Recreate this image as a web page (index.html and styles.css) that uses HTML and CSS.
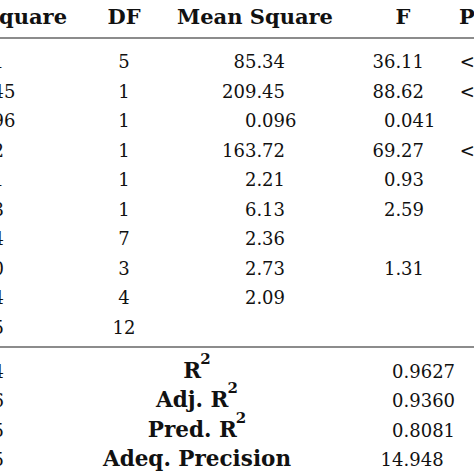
FILE: index.html
```html
<!DOCTYPE html>
<html lang="en">
<head>
<meta charset="utf-8">
<title>ANOVA</title>
<link rel="stylesheet" href="styles.css">
</head>
<body>
<div class="anova">
  <div class="thead">
    <div class="row">
      <div class="c-ss">Sum of Square</div>
      <div class="c-df">DF</div>
      <div class="c-ms">Mean Square</div>
      <div class="c-f">F</div>
      <div class="c-p">P-value</div>
    </div>
  </div>
  <div class="rule rule-top"></div>
  <div class="tbody">
    <div class="row">
      <div class="c-ss dec"><span class="i">426</span><span class="f">.71</span></div>
      <div class="c-df">5</div>
      <div class="c-ms dec"><span class="i">85</span><span class="f">.34</span></div>
      <div class="c-f dec"><span class="i">36</span><span class="f">.11</span></div>
      <div class="c-p dec"><span class="i">&lt; 0</span><span class="f">.0001</span></div>
    </div>
    <div class="row">
      <div class="c-ss dec"><span class="i">209</span><span class="f">.445</span></div>
      <div class="c-df">1</div>
      <div class="c-ms dec"><span class="i">209</span><span class="f">.45</span></div>
      <div class="c-f dec"><span class="i">88</span><span class="f">.62</span></div>
      <div class="c-p dec"><span class="i">&lt; 0</span><span class="f">.0001</span></div>
    </div>
    <div class="row">
      <div class="c-ss dec"><span class="i">0</span><span class="f">.096</span></div>
      <div class="c-df">1</div>
      <div class="c-ms dec"><span class="i">0</span><span class="f">.096</span></div>
      <div class="c-f dec"><span class="i">0</span><span class="f">.041</span></div>
      <div class="c-p dec"><span class="i">0</span><span class="f">.8435</span></div>
    </div>
    <div class="row">
      <div class="c-ss dec"><span class="i">163</span><span class="f">.72</span></div>
      <div class="c-df">1</div>
      <div class="c-ms dec"><span class="i">163</span><span class="f">.72</span></div>
      <div class="c-f dec"><span class="i">69</span><span class="f">.27</span></div>
      <div class="c-p dec"><span class="i">&lt; 0</span><span class="f">.0001</span></div>
    </div>
    <div class="row">
      <div class="c-ss dec"><span class="i">2</span><span class="f">.21</span></div>
      <div class="c-df">1</div>
      <div class="c-ms dec"><span class="i">2</span><span class="f">.21</span></div>
      <div class="c-f dec"><span class="i">0</span><span class="f">.93</span></div>
      <div class="c-p dec"><span class="i">0</span><span class="f">.3670</span></div>
    </div>
    <div class="row">
      <div class="c-ss dec"><span class="i">6</span><span class="f">.13</span></div>
      <div class="c-df">1</div>
      <div class="c-ms dec"><span class="i">6</span><span class="f">.13</span></div>
      <div class="c-f dec"><span class="i">2</span><span class="f">.59</span></div>
      <div class="c-p dec"><span class="i">0</span><span class="f">.1515</span></div>
    </div>
    <div class="row">
      <div class="c-ss dec"><span class="i">16</span><span class="f">.54</span></div>
      <div class="c-df">7</div>
      <div class="c-ms dec"><span class="i">2</span><span class="f">.36</span></div>
      <div class="c-f"></div>
      <div class="c-p"></div>
    </div>
    <div class="row">
      <div class="c-ss dec"><span class="i">8</span><span class="f">.20</span></div>
      <div class="c-df">3</div>
      <div class="c-ms dec"><span class="i">2</span><span class="f">.73</span></div>
      <div class="c-f dec"><span class="i">1</span><span class="f">.31</span></div>
      <div class="c-p dec"><span class="i">0</span><span class="f">.3868</span></div>
    </div>
    <div class="row">
      <div class="c-ss dec"><span class="i">8</span><span class="f">.34</span></div>
      <div class="c-df">4</div>
      <div class="c-ms dec"><span class="i">2</span><span class="f">.09</span></div>
      <div class="c-f"></div>
      <div class="c-p"></div>
    </div>
    <div class="row">
      <div class="c-ss dec"><span class="i">442</span><span class="f">.25</span></div>
      <div class="c-df">12</div>
      <div class="c-ms"></div>
      <div class="c-f"></div>
      <div class="c-p"></div>
    </div>
  </div>
  <div class="rule rule-mid"></div>
  <div class="tfoot">
    <div class="frow">
      <div class="c-ss dec"><span class="i">1</span><span class="f">.54</span></div>
      <div class="c-lab">R<sup class="sq">2</sup></div>
      <div class="c-val dec"><span class="i">0</span><span class="f">.9627</span></div>
    </div>
    <div class="frow">
      <div class="c-ss dec"><span class="i">13</span><span class="f">.46</span></div>
      <div class="c-lab">Adj. R<sup class="sq">2</sup></div>
      <div class="c-val dec"><span class="i">0</span><span class="f">.9360</span></div>
    </div>
    <div class="frow">
      <div class="c-ss dec"><span class="i">11</span><span class="f">.35</span></div>
      <div class="c-lab">Pred. R<sup class="sq">2</sup></div>
      <div class="c-val dec"><span class="i">0</span><span class="f">.8081</span></div>
    </div>
    <div class="frow">
      <div class="c-ss dec"><span class="i">84</span><span class="f">.95</span></div>
      <div class="c-lab">Adeq. Precision</div>
      <div class="c-val dec"><span class="i">14</span><span class="f">.948</span></div>
    </div>
  </div>
</div>
</body>
</html>
```
FILE: styles.css
```css
html, body {
  margin: 0;
  padding: 0;
  background: #ffffff;
  overflow: hidden;
}

body {
  color: #111111;
  font-family: "DejaVu Serif", serif;
  font-size: 18px;
}

.anova {
  width: 776px;
  margin-left: -200px;
  padding-top: 2px;
  white-space: nowrap;
}

.row {
  display: grid;
  grid-template-columns: 288px 72px 190px 106px 120px;
}

.frow {
  display: grid;
  grid-template-columns: 288px 218px 270px;
  align-items: baseline;
  line-height: 28.3px;
}

.thead .row {
  font-weight: bold;
  font-size: 21px;
  line-height: 29px;
}

.tbody {
  margin-top: 8px;
}

.tbody .row {
  line-height: 29.5px;
}

.tfoot {
  margin-top: 9px;
}

.rule {
  height: 2px;
  background: #8c8c8c;
}

.rule-top {
  margin-top: 6px;
}

.rule-mid {
  margin-top: 4px;
}

.thead .c-ss {
  text-align: right;
  padding-right: 21px;
}

.c-df,
.c-ms,
.c-f {
  text-align: center;
}

.c-p {
  text-align: left;
}

.thead .c-p {
  padding-left: 3px;
}

.c-lab {
  font-weight: bold;
  font-size: 21.5px;
  text-align: center;
}

.sq {
  font-size: 15px;
  line-height: 0;
  vertical-align: 14px;
  margin-left: -1px;
}

.dec {
  display: flex;
}

.dec .i {
  flex: none;
  text-align: right;
}

.c-ss .i {
  width: 175.4px;
}

.c-ms .i {
  width: 96.4px;
}

.c-f .i {
  width: 45.4px;
}

.c-p .i {
  width: 36px;
}

.c-val .i {
  width: 97.5px;
}
```
